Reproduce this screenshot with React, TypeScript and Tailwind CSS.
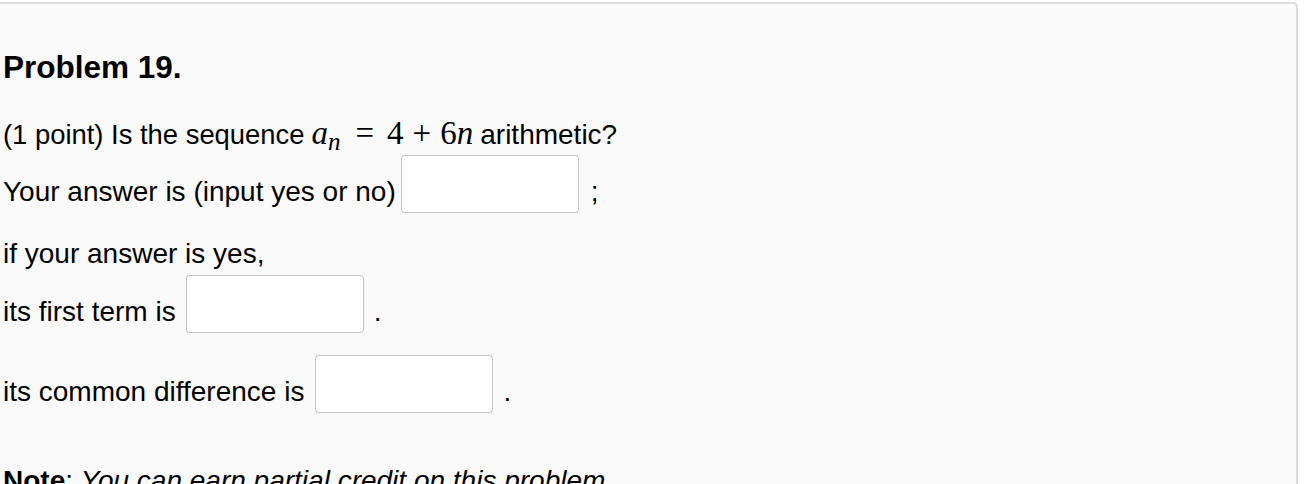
export default function App() {
  const font = { fontFamily: '"Liberation Sans", Arial, sans-serif' };
  const serif = { fontFamily: '"Liberation Serif", "Times New Roman", serif' };
  return (
    <div className="min-h-[484px] bg-white pt-[2px] overflow-hidden" style={font}>
      <div className="w-[1298px] h-[520px] bg-[#fafafa] border-t-2 border-r-2 border-[#dcdcdc] rounded-tr-[5px] pl-[3px] text-black">
        <h1 className="mt-[46px] text-[31.5px] leading-[34px] font-bold">Problem 19.</h1>

        <p className="mt-[34px] text-[28px] leading-[30px] flex items-baseline">
          <span className="text-[27.4px]">(1 point) Is the sequence</span>
          <span className="ml-[7px] text-[33px]" style={serif}>
            <i>a</i>
            <sub className="text-[25px] italic">n</sub>
            <span className="ml-[15px]">=</span>
            <span className="ml-[13px]">4</span>
            <span className="ml-[9px]">+</span>
            <span className="ml-[9px]">6</span>
            <i>n</i>
          </span>
          <span className="ml-[7px]">arithmetic?</span>
        </p>

        <div className="mt-[5px] flex items-end text-[28px] leading-[30px]">
          <span className="pb-[6px]">Your answer is (input yes or no)</span>
          <input className="ml-[5px] w-[178px] h-[58px] bg-white border border-[#c4c4c4] rounded-[4px]" />
          <span className="ml-[12px] pb-[6px]">;</span>
        </div>

        <p className="mt-[26px] text-[28px] leading-[30px]">if your answer is yes,</p>

        <div className="mt-[6px] flex items-end text-[28px] leading-[30px]">
          <span className="pb-[6px]">its first term is</span>
          <input className="ml-[10px] w-[178px] h-[58px] bg-white border border-[#c4c4c4] rounded-[4px]" />
          <span className="ml-[10px] pb-[6px]">.</span>
        </div>

        <div className="mt-[22px] flex items-end text-[28px] leading-[30px]">
          <span className="pb-[6px]">its common difference is</span>
          <input className="ml-[11px] w-[178px] h-[58px] bg-white border border-[#c4c4c4] rounded-[4px]" />
          <span className="ml-[10px] pb-[6px]">.</span>
        </div>

        <p className="mt-[53px] text-[28px] leading-[30px]">
          <b>Note</b>: <i>You can earn partial credit on this problem.</i>
        </p>
      </div>
    </div>
  );
}
